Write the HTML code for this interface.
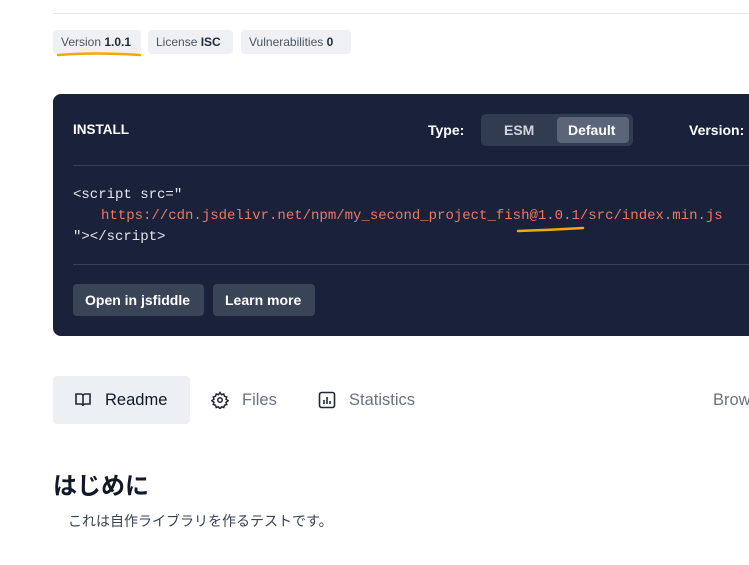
<!DOCTYPE html>
<html><head><meta charset="utf-8"><style>
body{margin:0;width:749px;height:565px;overflow:hidden;background:#fff;font-family:"Liberation Sans","Noto Sans CJK JP",sans-serif;position:relative}
.a{position:absolute;white-space:nowrap}
.badge{position:absolute;top:30px;height:24px;background:#eef0f3;border-radius:4px;font-size:12px;color:#4b5563;line-height:24px;padding:0 8px;box-sizing:border-box;white-space:nowrap}
.badge b{color:#1f2937;font-weight:600}
.box{position:absolute;left:53px;top:94px;width:720px;height:242px;background:#19223a;border-radius:8px}
.mono{font-family:"Liberation Mono",monospace;font-size:14px;line-height:21px;color:#e5e7eb;position:absolute;white-space:nowrap}
.btn{position:absolute;top:284px;height:32px;background:#3a4457;border-radius:4px;color:#fff;font-size:14px;font-weight:bold;line-height:32px;padding:0 12px;box-sizing:border-box;white-space:nowrap}
.tab{position:absolute;top:376px;height:48px;font-size:16.5px;line-height:48px;color:#6b7280}
</style></head><body>
<div class="a" style="left:53px;top:13px;width:696px;height:1px;background:#e5e7eb"></div>
<div class="badge" style="left:53px;width:88px">Version <b>1.0.1</b></div>
<div class="badge" style="left:148px;width:85px">License <b>ISC</b></div>
<div class="badge" style="left:241px;width:110px">Vulnerabilities <b>0</b></div>
<svg class="a" style="left:56px;top:50px" width="90" height="8"><path d="M2 5 Q40 2 84 5" stroke="#f5a800" stroke-width="2.5" fill="none" stroke-linecap="round"/></svg>
<div class="box"></div>
<div class="a" style="left:73px;top:122px;color:#fff;font-weight:bold;font-size:13.5px">INSTALL</div>
<div class="a" style="left:428px;top:122px;color:#fff;font-weight:bold;font-size:14px">Type:</div>
<div class="a" style="left:481px;top:114px;width:152px;height:32px;background:#323c50;border-radius:5px"></div>
<div class="a" style="left:557px;top:117px;width:72px;height:26px;background:#5b6579;border-radius:4px"></div>
<div class="a" style="left:504px;top:122px;color:#d1d5db;font-weight:bold;font-size:14px">ESM</div>
<div class="a" style="left:568px;top:122px;color:#fff;font-weight:bold;font-size:14px">Default</div>
<div class="a" style="left:689px;top:122px;color:#fff;font-weight:bold;font-size:14px">Version:</div>
<div class="a" style="left:73px;top:165px;width:676px;height:1px;background:#38425a"></div>
<div class="mono" style="left:73px;top:185px">&lt;script src="</div>
<div class="mono" style="left:101px;top:206px;color:#f07860">https://cdn.jsdelivr.net/npm/my_second_project_fish@1.0.1/src/index.min.js</div>
<div class="mono" style="left:73px;top:227px">"&gt;&lt;/script&gt;</div>
<svg class="a" style="left:515px;top:226px" width="72" height="8"><path d="M3 5 Q35 4 68 2" stroke="#f5a800" stroke-width="2.5" fill="none" stroke-linecap="round"/></svg>
<div class="a" style="left:73px;top:264px;width:676px;height:1px;background:#38425a"></div>
<div class="btn" style="left:73px;width:131px">Open in jsfiddle</div>
<div class="btn" style="left:213px;width:102px">Learn more</div>
<div class="a" style="left:53px;top:376px;width:137px;height:48px;background:#eceff3;border-radius:4px"></div>
<svg class="a" style="left:74px;top:391px" width="18" height="18" viewBox="0 0 18 18" fill="none" stroke="#1f2937" stroke-width="1.6"><path d="M2 3h5a2 2 0 0 1 2 2v10a2 2 0 0 0-2-2H2zM16 3h-5a2 2 0 0 0-2 2v10a2 2 0 0 1 2-2h5z"/></svg>
<div class="tab" style="left:105px;color:#111827">Readme</div>
<svg class="a" style="left:211px;top:391px" width="18" height="18" viewBox="0 0 24 24" fill="none" stroke="#1f2937" stroke-width="2"><circle cx="12" cy="12" r="3"/><path d="M12 2l2 3 3-1 1 3 3 1-1 3 3 2-3 2 1 3-3 1-1 3-3-1-2 3-2-3-3 1-1-3-3-1 1-3-3-2 3-2-1-3 3-1 1-3 3 1z"/></svg>
<div class="tab" style="left:242px">Files</div>
<svg class="a" style="left:318px;top:391px" width="18" height="18" viewBox="0 0 18 18" fill="none" stroke="#1f2937" stroke-width="1.6"><rect x="1.5" y="1.5" width="15" height="15" rx="2"/><path d="M6 13V9M9 13V6M12 13V10"/></svg>
<div class="tab" style="left:349px">Statistics</div>
<div class="tab" style="left:713px">Brow</div>
<div class="a" style="left:53px;top:466px;font-size:24px;font-weight:bold;color:#111827">はじめに</div>
<div class="a" style="left:68px;top:511px;font-size:14px;color:#374151">これは自作ライブラリを作るテストです。</div>
</body></html>
